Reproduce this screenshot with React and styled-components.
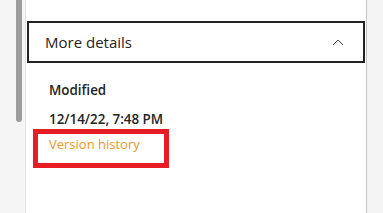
import styled, { createGlobalStyle } from "styled-components";

const GlobalStyle = createGlobalStyle`
  html, body {
    margin: 0;
    padding: 0;
    background: #ffffff;
  }
  body {
    font-family: "Open Sans", "Noto Sans", sans-serif;
  }
`;

const Page = styled.div`
  display: flex;
  width: 383px;
  height: 213px;
  overflow: hidden;
`;

const Gutter = styled.div`
  width: 25px;
  flex-shrink: 0;
  background: #f5f5f5;
  border-right: 1px solid #e4e4e4;
`;

const Thumb = styled.div`
  width: 6px;
  height: 122px;
  margin-left: 16px;
  background: #9d9d9d;
  border-radius: 0 0 3px 3px;
`;

const Panel = styled.div`
  flex: 1;
  position: relative;
  background: #ffffff;
  border-right: 1px solid #c6c6c6;
  padding: 21px 1px 0 1px;
`;

const RightGutter = styled.div`
  width: 16px;
  flex-shrink: 0;
  background: #f4f4f4;
`;

const AccordionHeader = styled.button`
  display: flex;
  align-items: center;
  justify-content: space-between;
  width: 100%;
  height: 42px;
  box-sizing: border-box;
  border: 2px solid #222222;
  background: #ffffff;
  padding: 0 19px 0 16px;
  font-family: "Open Sans", "Noto Sans", sans-serif;
  font-size: 15px;
  color: #242424;
  cursor: pointer;
`;

const Details = styled.div`
  display: flex;
  flex-direction: column;
  padding: 18px 0 0 22px;
`;

const Label = styled.div`
  font-size: 13.4px;
  font-weight: 600;
  color: #242424;
  line-height: 18px;
`;

const Value = styled.div`
  margin-top: 11px;
  font-size: 13.4px;
  font-weight: 600;
  color: #242424;
  line-height: 18px;
`;

const HistoryLink = styled.a`
  margin-top: 7px;
  font-size: 13px;
  color: #f0961c;
  line-height: 18px;
  text-decoration: none;
  cursor: pointer;
`;

const Highlight = styled.div`
  position: absolute;
  left: 7px;
  top: 129px;
  width: 136px;
  height: 39px;
  box-sizing: border-box;
  border: 5px solid #e81c24;
  pointer-events: none;
`;

const Chevron = () => (
  <svg width="12" height="7" viewBox="0 0 12 7">
    <polyline
      points="1,6 6,1 11,6"
      fill="none"
      stroke="#404040"
      strokeWidth="1"
    />
  </svg>
);

export default function App() {
  return (
    <>
      <GlobalStyle />
      <Page>
        <Gutter>
          <Thumb />
        </Gutter>
        <Panel>
          <AccordionHeader>
            <span>More details</span>
            <Chevron />
          </AccordionHeader>
          <Details>
            <Label>Modified</Label>
            <Value>12/14/22, 7:48 PM</Value>
            <HistoryLink>Version history</HistoryLink>
          </Details>
          <Highlight />
        </Panel>
        <RightGutter />
      </Page>
    </>
  );
}
